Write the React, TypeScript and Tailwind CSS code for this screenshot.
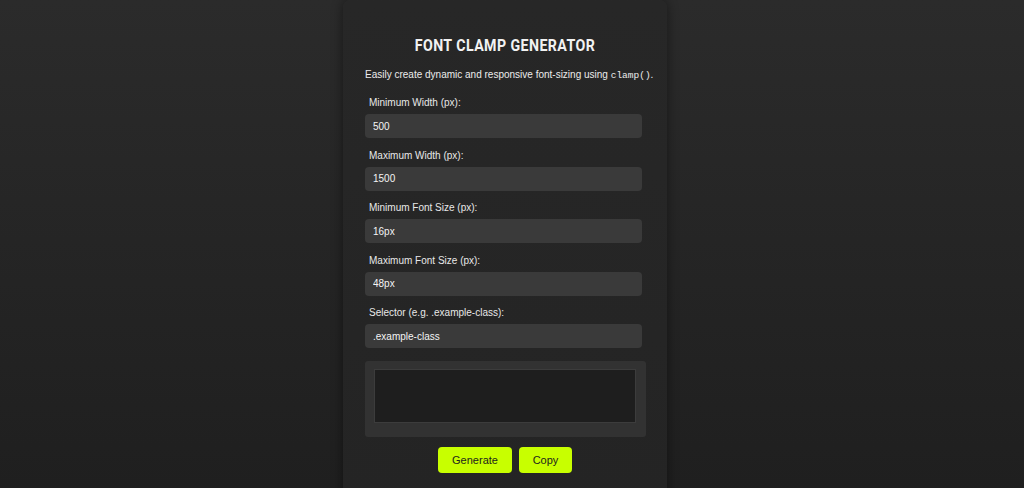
import React, { useState } from 'react';

const fields = [
  { label: 'Minimum Width (px):', value: '500' },
  { label: 'Maximum Width (px):', value: '1500' },
  { label: 'Minimum Font Size (px):', value: '16px' },
  { label: 'Maximum Font Size (px):', value: '48px' },
  { label: 'Selector (e.g. .example-class):', value: '.example-class' },
];

export default function App() {
  const [values, setValues] = useState(fields.map(f => f.value));
  const [output, setOutput] = useState('');

  return (
    <div className="h-[488px] overflow-hidden bg-gradient-to-b from-[#2b2b2b] to-[#1f1f1f] flex justify-center pr-[14px] font-['Liberation_Sans',Arial,sans-serif]">
      <div className="w-[324px] h-[500px] bg-gradient-to-b from-[#272727] to-[#242424] rounded-t-lg shadow-[0_0_12px_rgba(0,0,0,0.45)] px-[22px] pt-[36px]">
        <h1 className="text-center leading-[20px]">
          <span className="inline-block scale-x-[0.86] text-[#f2f2f2] text-[16.5px] font-bold tracking-[0.5px] font-['Roboto',sans-serif]">
            FONT CLAMP GENERATOR
          </span>
        </h1>
        <p className="mt-[12px] text-center text-[#ececec] text-[10px] leading-[13px] whitespace-nowrap">
          Easily create dynamic and responsive font-sizing using <code className="font-['Liberation_Mono',monospace] text-[9.5px]">clamp()</code>.
        </p>
        <div className="mt-[14px] flex flex-col gap-[10.5px]">
          {fields.map((f, i) => (
            <div key={f.label} className="flex flex-col">
              <label className="pl-[4px] text-[#e8e8e8] text-[10px] leading-[14px]">{f.label}</label>
              <input
                value={values[i]}
                onChange={e => setValues(v => v.map((x, j) => (j === i ? e.target.value : x)))}
                className="mt-[4px] w-[277px] h-[24px] rounded-[4px] bg-[#3a3a3a] px-[8px] text-[10px] text-[#f4f4f4] outline-none"
              />
            </div>
          ))}
        </div>
        <div className="mt-[13px] w-[281px] h-[76px] bg-[#323232] rounded-[3px] pl-[9px] pr-[10px] pt-[8px]">
          <textarea
            value={output}
            onChange={e => setOutput(e.target.value)}
            className="block w-full h-[54px] bg-[#1e1e1e] border border-[#3c3c3c] resize-none outline-none text-[10px] text-[#eee] p-2"
          />
        </div>
        <div className="mt-[10px] flex justify-center gap-[7px]">
          <button className="w-[74px] h-[26px] rounded-[4px] bg-[#c8ff00] text-[#1e1e1e] text-[11px]">Generate</button>
          <button className="w-[53px] h-[26px] rounded-[4px] bg-[#c8ff00] text-[#1e1e1e] text-[11px]">Copy</button>
        </div>
      </div>
    </div>
  );
}
